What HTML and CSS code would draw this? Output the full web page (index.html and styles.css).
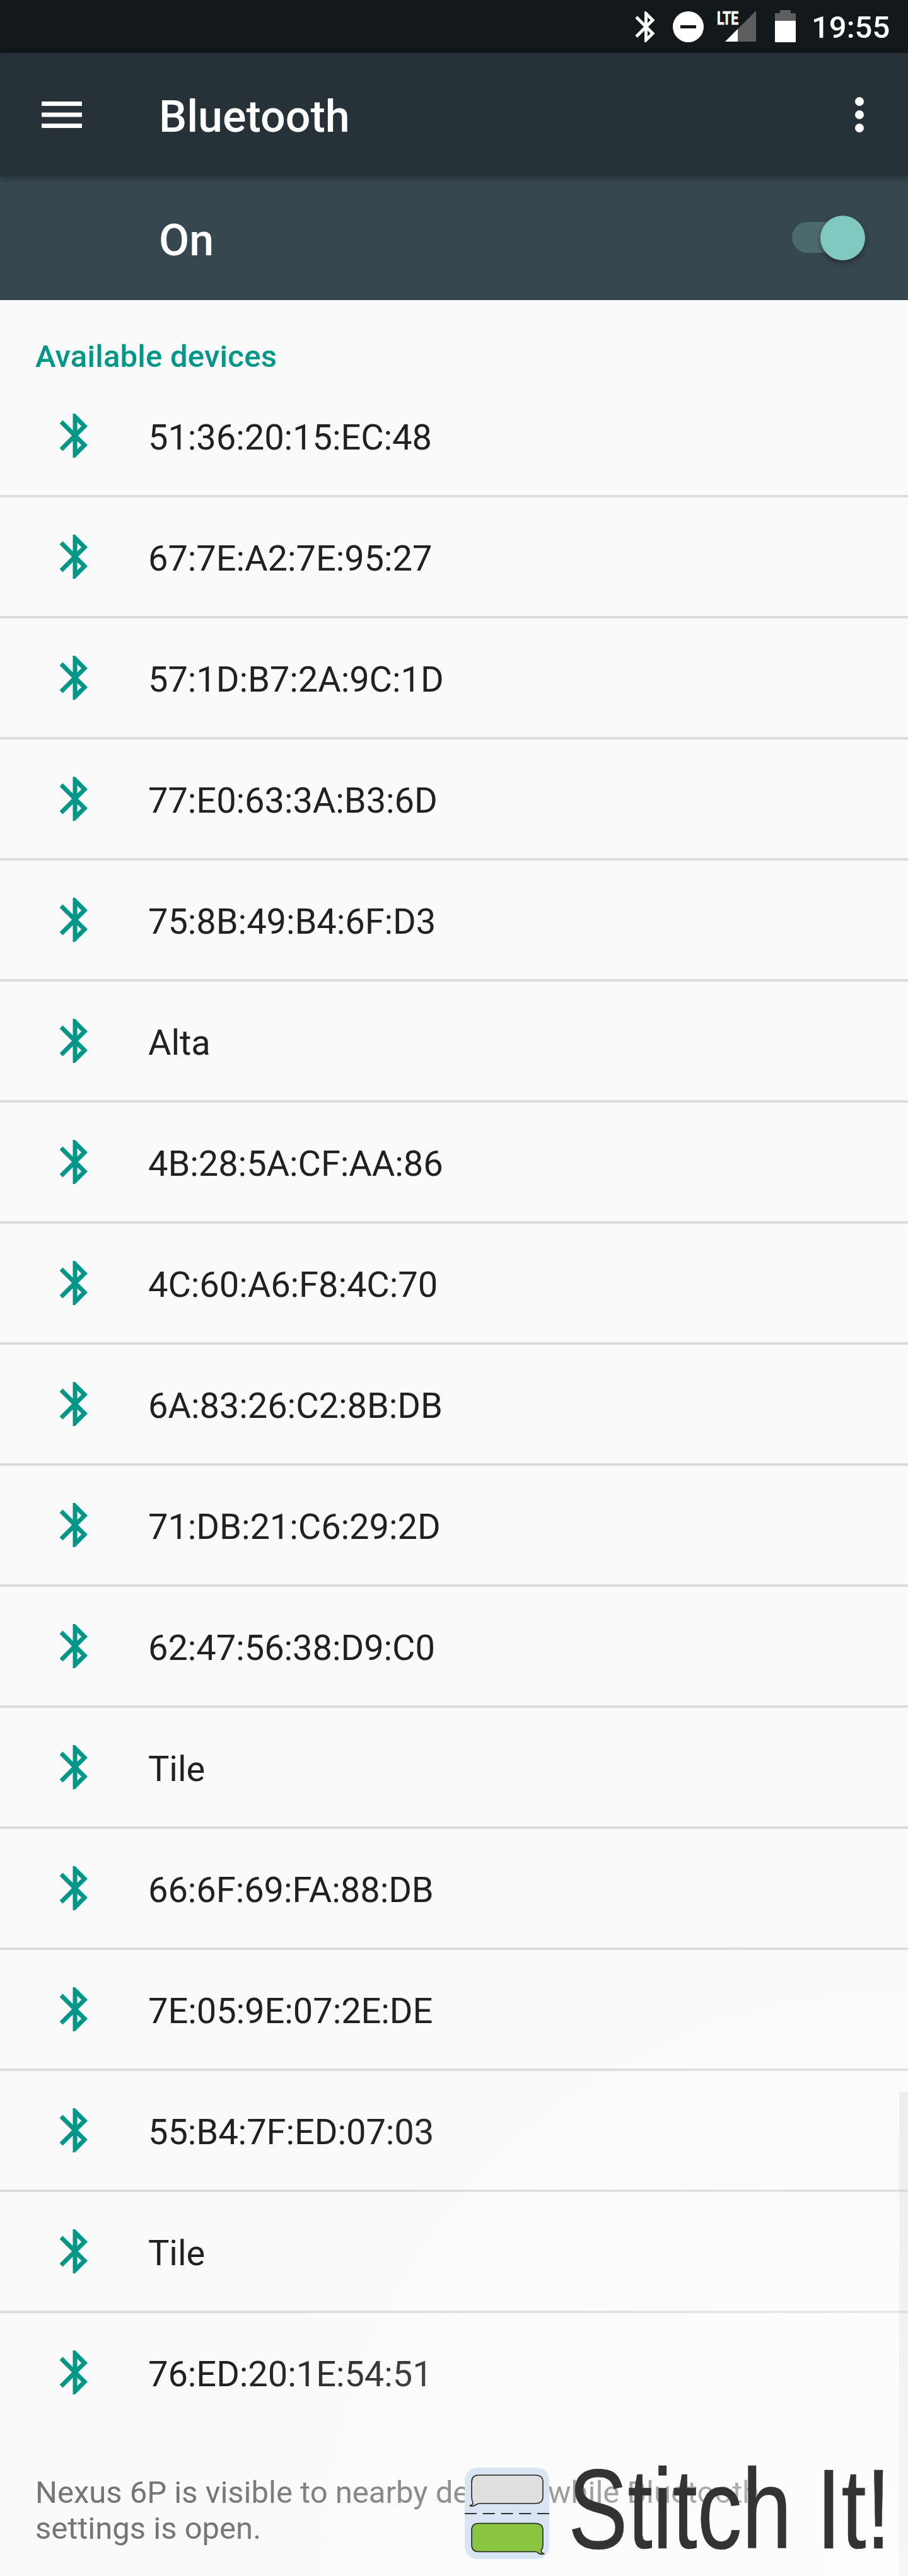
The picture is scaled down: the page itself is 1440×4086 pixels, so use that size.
FILE: index.html
```html
<!DOCTYPE html>
<html lang="en">
<head>
<meta charset="utf-8">
<title>Bluetooth</title>
<link rel="stylesheet" href="styles.css">
</head>
<body>
<svg class="defs" width="0" height="0" aria-hidden="true">
  <symbol id="bt" viewBox="0 0 24 24"><path fill="currentColor" fill-rule="evenodd" d="M17.71 7.71L12 2h-1v7.59L6.41 5 5 6.41 10.59 12 5 17.59 6.41 19 11 14.41V22h1l5.71-5.71-4.3-4.29 4.3-4.29zM13 5.83l1.88 1.88L13 9.59V5.83zm1.88 10.46L13 18.17v-3.76l1.88 1.88z"/></symbol>
</svg>
<div class="screen">
  <header class="status">
    <svg class="status-bt"><use href="#bt"/></svg>
    <svg class="status-dnd" viewBox="0 0 49 49"><circle cx="24.5" cy="24.5" r="24.5" fill="#fff"/><rect x="12" y="22" width="25" height="5" fill="#13181b"/></svg>
    <svg class="status-signal" viewBox="0 0 62 52">
      <text class="lte" x="0" y="23" textLength="34" lengthAdjust="spacingAndGlyphs">LTE</text>
      <path d="M62 1v49H13z" fill="#5c5e60"/><path d="M33 30v20H13z" fill="#fff"/>
    </svg>
    <svg class="status-battery" viewBox="0 0 33 51"><path d="M8 0h17v5h8v12H0V5h8z" fill="#5c5e60"/><path d="M0 17h33v34H0z" fill="#fff"/></svg>
    <span class="clock">19:55</span>
  </header>
  <div class="appbar">
    <svg class="menu" viewBox="0 0 64 42"><path d="M0 0h64v7H0zM0 17.5h64v7H0zM0 35h64v7H0z" fill="#fff"/></svg>
    <h1 class="title">Bluetooth</h1>
    <svg class="more" viewBox="0 0 14 56"><circle cx="7" cy="7" r="7"/><circle cx="7" cy="28" r="7"/><circle cx="7" cy="49" r="7"/></svg>
  </div>
  <div class="switchbar">
    <span class="title">On</span>
    <span class="toggle"><span class="thumb"></span></span>
  </div>
  <h2 class="category">Available devices</h2>
  <ul class="devices">
    <li><svg><use href="#bt"/></svg><span>51:36:20:15:EC:48</span></li>
    <li><svg><use href="#bt"/></svg><span>67:7E:A2:7E:95:27</span></li>
    <li><svg><use href="#bt"/></svg><span>57:1D:B7:2A:9C:1D</span></li>
    <li><svg><use href="#bt"/></svg><span>77:E0:63:3A:B3:6D</span></li>
    <li><svg><use href="#bt"/></svg><span>75:8B:49:B4:6F:D3</span></li>
    <li><svg><use href="#bt"/></svg><span>Alta</span></li>
    <li><svg><use href="#bt"/></svg><span>4B:28:5A:CF:AA:86</span></li>
    <li><svg><use href="#bt"/></svg><span>4C:60:A6:F8:4C:70</span></li>
    <li><svg><use href="#bt"/></svg><span>6A:83:26:C2:8B:DB</span></li>
    <li><svg><use href="#bt"/></svg><span>71:DB:21:C6:29:2D</span></li>
    <li><svg><use href="#bt"/></svg><span>62:47:56:38:D9:C0</span></li>
    <li><svg><use href="#bt"/></svg><span>Tile</span></li>
    <li><svg><use href="#bt"/></svg><span>66:6F:69:FA:88:DB</span></li>
    <li><svg><use href="#bt"/></svg><span>7E:05:9E:07:2E:DE</span></li>
    <li><svg><use href="#bt"/></svg><span>55:B4:7F:ED:07:03</span></li>
    <li><svg><use href="#bt"/></svg><span>Tile</span></li>
    <li><svg><use href="#bt"/></svg><span>76:ED:20:1E:54:51</span></li>
  </ul>
  <p class="note">Nexus 6P is visible to nearby devices while Bluetooth<br>settings is open.</p>
  <div class="scrollbar"></div>
  <div class="fade"></div>
  <svg class="watermark" viewBox="0 0 680 160">
    <rect x="0" y="4" width="134" height="145" rx="20" fill="#d9e5f3"/>
    <g stroke="#222" stroke-width="1.6" stroke-linejoin="round">
      <path fill="#dedfde" d="M22 16h90q12 0 12 11v23q0 11-12 11H24q-4 0-8 3q-4 2-8 .5q5-1 5-5q-2-4-2-9V27q0-11 11-11z"/>
      <path fill="#8ac541" d="M22 92.500h90q12 0 12 11v23q0 6-3 9q0 4 5 5q-5 2-9-.5q-2-2.500-5-2.500H22q-11 0-11-11v-23q0-11 11-11z"/>
    </g>
    <path d="M0 77h134" stroke="#333" stroke-width="2.200" stroke-dasharray="19 9.750"/>
    <text class="brand" x="164" y="132" textLength="512" lengthAdjust="spacingAndGlyphs">Stitch It!</text>
  </svg>
</div>
</body>
</html>
```
FILE: styles.css
```css
* { box-sizing: border-box; }
body { margin: 0; background: #fafafa; font-family: Roboto, sans-serif; }
.defs { position: absolute; }
.screen { position: relative; width: 1440px; height: 4086px; overflow: hidden; }

.status {
  display: flex; align-items: flex-start; height: 84px;
  padding-left: 995px; background: #13181b; color: #fff;
}
.status-bt { width: 59px; height: 59px; margin-top: 13px; }
.status-dnd { width: 49px; height: 49px; margin: 18px 0 0 13px; }
.status-signal { width: 62px; height: 52px; margin: 16px 0 0 21px; overflow: visible; }
.lte { font: 700 29px Roboto, sans-serif; fill: #fff; stroke: #fff; stroke-width: .7px; }
.status-battery { width: 33px; height: 51px; margin: 16px 0 0 30px; }
.clock { margin: 15px 0 0 25px; font-size: 49px; line-height: 57px; font-weight: 500; }

.appbar {
  position: relative; z-index: 1; display: flex; align-items: center; height: 196px;
  padding: 0 70px 0 66px; background: #263238;
  box-shadow: 0 2px 10px rgba(0, 0, 0, .35);
}
.menu { width: 64px; height: 42px; }
.title { margin: 6px 0 0; font-size: 70px; line-height: 82px; font-weight: 500; color: #fff; }
.appbar .title { flex: 1; margin-left: 122px; }
.more { width: 14px; height: 56px; fill: #fff; }

.switchbar {
  display: flex; align-items: center; justify-content: space-between; height: 196px;
  padding: 0 68px 0 252px; background: #37474f;
}
.toggle {
  display: flex; align-items: center; justify-content: flex-end; width: 116px; height: 49px;
  margin-top: -3px; border-radius: 25px;
  background: linear-gradient(#4c6a6c, #4c6a6c) left / 104px 100% no-repeat;
}
.thumb {
  flex: none; width: 71px; height: 71px; border-radius: 50%; background: #80c8c0;
  margin-top: 2px; box-shadow: 0 4px 9px rgba(0, 0, 0, .4);
}

.category {
  margin: 0; height: 121px; padding: 61px 56px 0; font-size: 49px; line-height: 58px;
  font-weight: 500; letter-spacing: .25px; color: #009688;
}
.devices { margin: 0; padding: 0; list-style: none; }
.devices li {
  display: flex; align-items: center; height: 192px; padding: 0 77px;
  border-bottom: 4px solid rgba(0, 0, 0, .12);
}
.devices li:last-child { border-color: transparent; }
.devices svg { width: 84px; height: 84px; color: #009688; }
.devices span { margin: 5px 0 0 74px; font-size: 56px; line-height: 66px; letter-spacing: -.05px; color: #212121; }

.note { margin: 0; padding: 64px 56px 0; font-size: 49px; line-height: 57px; color: #757575; }

.scrollbar { position: absolute; right: 0; top: 3318px; width: 14px; height: 768px; background: rgba(0, 0, 0, .064); }
.fade {
  position: absolute; right: 0; bottom: 0; width: 1140px; height: 1140px;
  background: radial-gradient(circle 1125px at 100% 100%, rgba(255, 255, 255, .57), rgba(255, 255, 255, 0));
}
.watermark { position: absolute; left: 737px; top: 3910px; width: 680px; height: 160px; overflow: visible; }
.brand { font: 180.5px "Liberation Sans", Arial, sans-serif; fill: #333; stroke: #333; stroke-width: .6px; }
```
